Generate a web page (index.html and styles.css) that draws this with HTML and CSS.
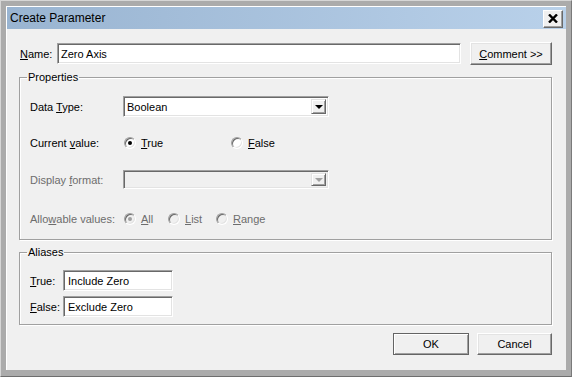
FILE: index.html
```html
<!DOCTYPE html>
<html lang="en">
<head>
    <meta charset="UTF-8">
    <title>Create Parameter</title>
    <link rel="stylesheet" href="styles.css">
</head>
<body>

    <div class="frame">
        <div class="window">

            <div class="titlebar">
                <span class="title">Create Parameter</span>
                <button class="close" type="button">
                    <svg width="10" height="9" viewBox="0 0 10 9"><path d="M1 0.5 L9 8.5 M9 0.5 L1 8.5" stroke="#000" stroke-width="2.4"/></svg>
                </button>
            </div>

            <div class="content">

                <div class="name-row">
                    <span class="name-label"><u>N</u>ame:</span>
                    <div class="field name-field">Zero Axis</div>
                    <button class="btn comment-btn" type="button"><u>C</u>omment &gt;&gt;</button>
                </div>

                <fieldset class="group props">
                    <legend>Properties</legend>

                    <div class="row">
                        <span class="label">Data <u>T</u>ype:</span>
                        <div class="select">
                            <span class="select-text">Boolean</span>
                            <span class="drop"><span class="arrow"></span></span>
                        </div>
                    </div>

                    <div class="row row-2">
                        <span class="label">Current <u>v</u>alue:</span>
                        <span class="option opt-true"><span class="radio checked"></span><span><u>T</u>rue</span></span>
                        <span class="option"><span class="radio"></span><span><u>F</u>alse</span></span>
                    </div>

                    <div class="row row-3 disabled">
                        <span class="label">Display <u>f</u>ormat:</span>
                        <div class="select select-off">
                            <span class="select-text"></span>
                            <span class="drop"><span class="arrow"></span></span>
                        </div>
                    </div>

                    <div class="row row-4 disabled">
                        <span class="label">Allo<u>w</u>able values:</span>
                        <span class="option opt-all"><span class="radio checked"></span><span><u>A</u>ll</span></span>
                        <span class="option opt-list"><span class="radio"></span><span><u>L</u>ist</span></span>
                        <span class="option"><span class="radio"></span><span><u>R</u>ange</span></span>
                    </div>
                </fieldset>

                <fieldset class="group aliases">
                    <legend>Aliases</legend>
                    <div class="alias-row">
                        <span class="alias-label"><u>T</u>rue:</span>
                        <div class="field alias-field">Include Zero</div>
                    </div>
                    <div class="alias-row alias-row-2">
                        <span class="alias-label"><u>F</u>alse:</span>
                        <div class="field alias-field">Exclude Zero</div>
                    </div>
                </fieldset>

                <div class="actions">
                    <button class="btn ok-btn" type="button">OK</button>
                    <button class="btn cancel-btn" type="button">Cancel</button>
                </div>

            </div>
        </div>
    </div>

</body>
</html>
```

FILE: styles.css
```css
* {
    margin: 0px;
    padding: 0px;
    box-sizing: border-box;
}
html, body {
    width: 100%;
    height: 100%;
}
body {
    font-family: "Liberation Sans", Arial, sans-serif;
    font-size: 11px;
    color: #000;
    background: #ababab;
}
u {
    text-decoration: underline;
    text-underline-offset: 1px;
}

/* window frame */
.frame {
    width: 572px;
    height: 377px;
    background: #ababab;
    border-top: 1px solid #d6d6d6;
    border-left: 1px solid #d6d6d6;
    border-right: 1px solid #7a7a7a;
    border-bottom: 1px solid #6e6e6e;
    padding: 5px 5px 6px 5px;
}
.window {
    width: 100%;
    height: 100%;
    border-top: 1px solid #fff;
    border-left: 1px solid #fff;
    background: #f0f0f0;
    display: flex;
    flex-direction: column;
}
.titlebar {
    height: 22px;
    display: flex;
    align-items: center;
    justify-content: space-between;
    padding: 0 3px 0 3px;
    background: linear-gradient(to right, #99b4d1, #b9d1ea);
}
.title {
    font-size: 12px;
    color: #000;
}
.close {
    width: 20px;
    height: 18px;
    display: flex;
    align-items: center;
    justify-content: center;
    background: #f0f0f0;
    border: 1px solid;
    border-color: #fff #696969 #696969 #fff;
    box-shadow: inset -1px -1px #a0a0a0;
    margin-top: 1px;
}

/* dialog body */
.content {
    flex: 1;
    padding: 13px 14px 0 12px;
}
.name-row {
    display: flex;
    align-items: center;
    height: 23px;
    padding-left: 1px;
}
.name-label {
    width: 37px;
}
.field {
    height: 21px;
    background: #fff;
    border: 1px solid;
    border-color: #a0a0a0 #fff #fff #a0a0a0;
    box-shadow: inset 1px 1px #696969, inset -1px -1px #e3e3e3;
    display: flex;
    align-items: center;
    padding-left: 3px;
}
.name-field {
    flex: 1;
}
.btn {
    height: 23px;
    font-family: "Liberation Sans", Arial, sans-serif;
    font-size: 11px;
    color: #000;
    background: #f0f0f0;
    border: 1px solid;
    border-color: #fff #696969 #696969 #fff;
    box-shadow: inset -1px -1px #a0a0a0, inset 1px 1px #e3e3e3;
}
.comment-btn {
    width: 82px;
    margin-left: 9px;
}

/* group boxes */
.group {
    border: 1px solid #a0a0a0;
    box-shadow: 1px 1px #fff, inset 1px 1px #fff;
}
.group legend {
    line-height: 13px;
    padding: 0 1px;
    margin-left: -3px;
}
.props {
    margin-top: 6px;
    padding: 12px 12px 10px 10px;
}
.row {
    display: flex;
    align-items: center;
    height: 21px;
}
.row-2 {
    margin-top: 15px;
}
.row-3 {
    margin-top: 16px;
}
.row-4 {
    margin-top: 18px;
}
.label {
    width: 93px;
}
.disabled {
    color: #6d6d6d;
}
.select {
    width: 206px;
    height: 21px;
    background: #fff;
    border: 1px solid;
    border-color: #a0a0a0 #fff #fff #a0a0a0;
    box-shadow: inset 1px 1px #696969, inset -1px -1px #e3e3e3;
    display: flex;
    padding: 2px 2px 2px 2px;
}
.select-off {
    height: 19px;
    background: #f0f0f0;
}
.select-text {
    flex: 1;
    display: flex;
    align-items: center;
    padding-left: 1px;
}
.drop {
    width: 15px;
    background: #f0f0f0;
    border: 1px solid;
    border-color: #e3e3e3 #696969 #696969 #e3e3e3;
    box-shadow: inset 1px 1px #fff, inset -1px -1px #a0a0a0;
    display: flex;
    align-items: center;
    justify-content: center;
}
.arrow {
    width: 0;
    height: 0;
    border-left: 4px solid transparent;
    border-right: 4px solid transparent;
    border-top: 4px solid #000;
    margin-top: 1px;
}
.select-off .arrow {
    border-top-color: #a0a0a0;
}
.option {
    display: flex;
    align-items: center;
    gap: 5px;
    margin-left: 1px;
}
.opt-true {
    width: 106px;
}
.opt-all {
    width: 43px;
}
.opt-list {
    width: 47px;
}
.radio {
    position: relative;
    width: 12px;
    height: 12px;
    border-radius: 50%;
    background: #fff;
    border: 1px solid;
    border-color: #a0a0a0 #fff #fff #a0a0a0;
    box-shadow: inset 1px 1px #696969, inset -1px -1px #e3e3e3;
}
.disabled .radio {
    background: #f0f0f0;
}
.radio.checked::after {
    content: "";
    position: absolute;
    left: 3px;
    top: 3px;
    width: 4px;
    height: 4px;
    border-radius: 50%;
    background: #000;
}
.disabled .radio.checked::after {
    background: #a0a0a0;
}

.aliases {
    margin-top: 6px;
    padding: 11px 12px 7px 10px;
}
.alias-row {
    display: flex;
    align-items: center;
    height: 21px;
}
.alias-row-2 {
    margin-top: 5px;
}
.alias-label {
    width: 33px;
}
.alias-field {
    width: 110px;
    padding-left: 4px;
}

.actions {
    display: flex;
    justify-content: flex-end;
    gap: 8px;
    margin-top: 8px;
}
.ok-btn {
    width: 76px;
    height: 22px;
    border: 1px solid #646464;
    box-shadow: inset 1px 1px #fff, inset -1px -1px #a0a0a0;
}
.cancel-btn {
    width: 75px;
    height: 22px;
}
```
